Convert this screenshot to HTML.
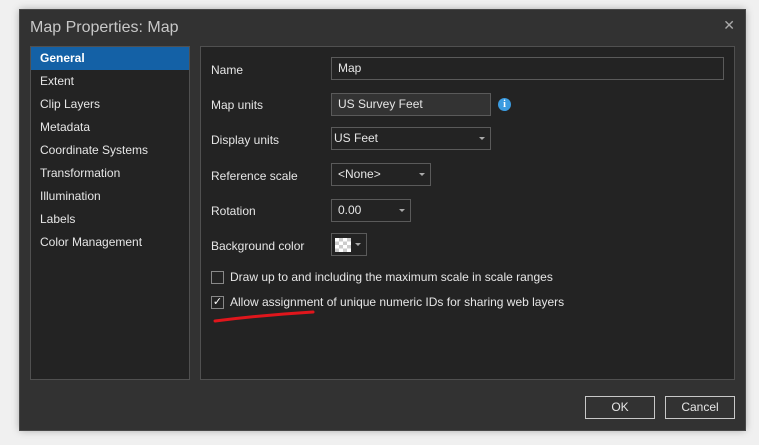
<!DOCTYPE html>
<html><head><style>
body{margin:0;width:759px;height:445px;background:#f0f0f0;position:relative;overflow:hidden;font-family:"Liberation Sans",sans-serif;font-size:12px;color:#e6e6e6}
.dlg{position:absolute;left:20px;top:10px;width:725px;height:420px;background:#323232;box-shadow:0 0 0 1px #484848,0 0 8px rgba(0,0,0,.35)}
.a{position:absolute}
.title{left:10px;top:9px;font-size:16px;color:#c8c8c8}
.x{right:10px;top:8px;font-size:14px;color:#aaa;font-family:"DejaVu Sans",sans-serif;font-weight:200}
.list{left:10px;top:36px;width:160px;height:334px;background:#232323;border:1px solid #505050;box-sizing:border-box}
.list div{height:23px;line-height:22px;padding-left:9px}
.sel{background:#1461a6;font-weight:bold;color:#fff}
.panel{left:180px;top:36px;width:535px;height:334px;background:#232323;border:1px solid #505050;box-sizing:border-box}
.lbl{left:10px}
.box{border:1px solid #5a5a5a;box-sizing:border-box;height:23px;line-height:21px;padding-left:6px}
.arr{position:absolute;right:5px;top:9px;width:0;height:0;border-left:3px solid transparent;border-right:3px solid transparent;border-top:3px solid #aaa}
.btn{border:1px solid #c8c8c8;box-sizing:border-box;width:70px;height:23px;text-align:center;line-height:21px;top:386px}
.cb{width:13px;height:13px;border:1px solid #888;box-sizing:border-box;left:10px}
</style></head><body>
<div class="dlg">
<div class="a title">Map Properties: Map</div>
<div class="a x">✕</div>
<div class="a list">
<div class="sel">General</div><div>Extent</div><div>Clip Layers</div><div>Metadata</div><div>Coordinate Systems</div><div>Transformation</div><div>Illumination</div><div>Labels</div><div>Color Management</div>
</div>
<div class="a panel">
<div class="a lbl" style="top:16px">Name</div>
<div class="a box" style="left:130px;top:10px;width:393px">Map</div>
<div class="a lbl" style="top:51px">Map units</div>
<div class="a box" style="left:130px;top:46px;width:160px;background:#333">US Survey Feet</div>
<div class="a" style="left:297px;top:51px;width:13px;height:13px;border-radius:50%;background:#3b9be0;color:#fff;font-size:10px;font-weight:bold;text-align:center;line-height:13px;font-family:'Liberation Serif',serif">i</div>
<div class="a lbl" style="top:86px">Display units</div>
<div class="a box" style="left:130px;top:80px;width:160px;padding-left:2px">US Feet<span class="arr"></span></div>
<div class="a lbl" style="top:122px">Reference scale</div>
<div class="a box" style="left:130px;top:116px;width:100px">&lt;None&gt;<span class="arr"></span></div>
<div class="a lbl" style="top:157px">Rotation</div>
<div class="a box" style="left:130px;top:152px;width:80px">0.00<span class="arr"></span></div>
<div class="a lbl" style="top:192px">Background color</div>
<div class="a box" style="left:130px;top:186px;width:36px;padding:0">
<div style="position:absolute;left:3px;top:4px;width:16px;height:14px;background:repeating-conic-gradient(#ccc 0 25%,#fff 0 50%) 0 0/8px 7px"></div><span class="arr"></span></div>
<div class="a cb" style="top:224px"></div>
<div class="a" style="left:29px;top:223px">Draw up to and including the maximum scale in scale ranges</div>
<div class="a cb" style="top:249px;color:#fff;font-size:11px;line-height:11px;text-align:center">✓</div>
<div class="a" style="left:29px;top:248px">Allow assignment of unique numeric IDs for sharing web layers</div>
<svg class="a" style="left:12px;top:262px" width="104" height="16"><path d="M2 12 Q50 6 100 3" stroke="#e0161c" stroke-width="3" fill="none" stroke-linecap="round"/></svg>
</div>
<div class="a btn" style="left:565px">OK</div>
<div class="a btn" style="left:645px">Cancel</div>
</div>
</body></html>
